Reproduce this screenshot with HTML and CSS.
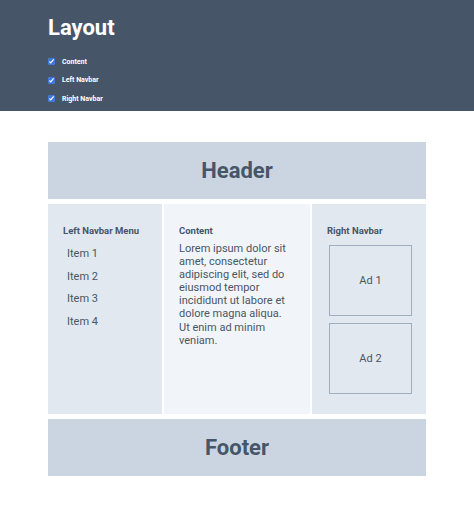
FILE: index.html
```html
<!DOCTYPE html>
<html lang="en">
<head>
<meta charset="utf-8">
<title>Layout</title>
<link rel="stylesheet" href="styles.css">
</head>
<body>
<section class="topbar">
  <h1 class="title">Layout</h1>
  <label class="opt"><input type="checkbox" checked><span>Content</span></label>
  <label class="opt"><input type="checkbox" checked><span>Left Navbar</span></label>
  <label class="opt"><input type="checkbox" checked><span>Right Navbar</span></label>
</section>
<main class="page">
  <header class="band">Header</header>
  <nav class="col side">
    <h2 class="col-title">Left Navbar Menu</h2>
    <ul class="menu">
      <li>Item 1</li>
      <li>Item 2</li>
      <li>Item 3</li>
      <li>Item 4</li>
    </ul>
  </nav>
  <article class="col content">
    <h2 class="col-title">Content</h2>
    <p class="lorem">Lorem ipsum dolor sit amet, consectetur adipiscing elit, sed do eiusmod tempor incididunt ut labore et dolore magna aliqua. Ut enim ad minim veniam.</p>
  </article>
  <aside class="col side">
    <h2 class="col-title">Right Navbar</h2>
    <div class="ads">
      <div class="ad">Ad 1</div>
      <div class="ad">Ad 2</div>
    </div>
  </aside>
  <footer class="band">Footer</footer>
</main>
</body>
</html>
```
FILE: styles.css
```css
html, body {
  margin: 0;
  padding: 0;
  background: #ffffff;
  font-family: Roboto, "Noto Sans", sans-serif;
  color: #475569;
}

.topbar {
  background: #475569;
  height: 111px;
  box-sizing: border-box;
  padding: 15px 48px 0;
  color: #ffffff;
}

.title {
  margin: 0 0 11.5px;
  font-size: 22px;
  line-height: 26px;
  font-weight: 700;
}

.opt {
  display: flex;
  align-items: center;
  height: 18.6px;
  font-size: 7px;
  font-weight: 700;
}

.opt input {
  width: 7px;
  height: 7px;
  margin: 0 7px 0 0;
  accent-color: #3b76e0;
}

.page {
  display: grid;
  grid-template-columns: 114px 1fr 114px;
  grid-template-rows: 57px 210px 57px;
  column-gap: 2px;
  row-gap: 5px;
  margin: 31px 48px 0;
}

.band {
  grid-column: 1 / -1;
  background: #cbd5e1;
  display: flex;
  align-items: center;
  justify-content: center;
  font-size: 22px;
  font-weight: 700;
  color: #475569;
}

.col {
  padding: 21px 15px 0;
}

.side {
  background: #e2e8f0;
}

.content {
  background: #f1f5f9;
}

.col-title {
  margin: 0 0 5px;
  font-size: 9.5px;
  line-height: 12px;
  font-weight: 700;
  color: #475569;
}

.menu {
  list-style: none;
  margin: 0;
  padding: 1px 0 0 4px;
}

.menu li {
  font-size: 11px;
  line-height: 22.5px;
  color: #4b5563;
}

.lorem {
  margin: 0;
  font-size: 11px;
  line-height: 13.1px;
  color: #4b5563;
}

.ads {
  display: flex;
  flex-direction: column;
  gap: 7px;
  padding-top: 2.5px;
  padding-left: 2px;
}

.ad {
  width: 83px;
  height: 71px;
  box-sizing: border-box;
  border: 1px solid #a0aec0;
  display: flex;
  align-items: center;
  justify-content: center;
  font-size: 11px;
  color: #4b5563;
}
```
